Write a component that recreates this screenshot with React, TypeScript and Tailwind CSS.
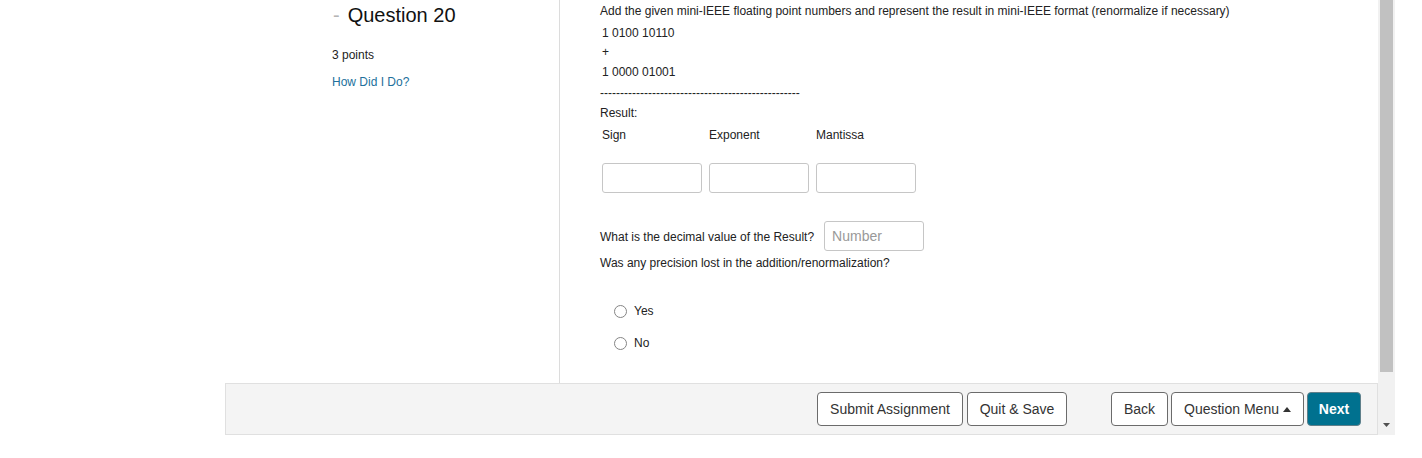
import React from 'react';

const dashes = '-'.repeat(50);

function RadioRow({ label, className }: { label: string; className?: string }) {
  return (
    <label className={`flex items-center h-5 pl-[14px] ${className ?? ''}`}>
      <span className="w-[13px] h-[13px] rounded-full border border-[#858585] bg-white" />
      <span className="ml-[7px]">{label}</span>
    </label>
  );
}

function FooterButton({ children, className }: { children: React.ReactNode; className?: string }) {
  return (
    <button
      className={`h-[34px] rounded-[4px] border border-[#6b6b6b] bg-white text-[14px] text-[#333] flex items-center justify-center ${className ?? ''}`}
    >
      {children}
    </button>
  );
}

export default function App() {
  return (
    <div
      className="w-[1422px] h-[458px] bg-white flex text-[#222]"
      style={{ fontFamily: '"Liberation Sans", Arial, sans-serif' }}
    >
      <div className="w-[225px] shrink-0" />

      <div className="w-[1153px] h-[435px] flex flex-col shrink-0">
        <div className="flex h-[383px]">
          {/* question info */}
          <div className="w-[335px] border-r border-[#dcdcdc] pl-[107px]">
            <h2 className="h-[31px] leading-[31px] text-[20px] text-[#111] flex">
              <span className="text-[#b5b5b5] mr-[8px] ml-[1px]">-</span>
              Question 20
            </h2>
            <p className="mt-[14px] h-5 leading-5 text-[12px] text-[#222]">3 points</p>
            <a className="block mt-[7px] h-5 leading-5 text-[12px] text-[#22709c]">How Did I Do?</a>
          </div>

          {/* question body */}
          <div className="flex-1 pl-[40px] pt-px text-[12px] leading-5">
            <p className="h-5">
              Add the given mini-IEEE floating point numbers and represent the result in mini-IEEE format (renormalize if necessary)
            </p>
            <div className="pl-[2px] mt-[2px]">
              <p className="h-5">1 0100 10110</p>
              <p className="h-[19px] leading-[19px]">+</p>
              <p className="h-5">1 0000 01001</p>
            </div>
            <p className="h-[19px] leading-[19px] mt-[2px]">{dashes}</p>
            <p className="h-5">Result:</p>

            <div className="flex gap-[7px] pl-[2px] mt-[2px]">
              {['Sign', 'Exponent', 'Mantissa'].map((label) => (
                <div key={label} className="w-[100px]">
                  <p className="h-5">{label}</p>
                  <input className="mt-[18px] w-[100px] h-[30px] rounded-[3px] border border-[#c6c6c6] bg-white" />
                </div>
              ))}
            </div>

            <div className="flex items-center h-[30px] mt-[28px]">
              <span className="pt-[2px]">What is the decimal value of the Result?</span>
              <input
                placeholder="Number"
                className="ml-[10px] w-[100px] h-[30px] rounded-[3px] border border-[#c6c6c6] px-[7px] text-[14px] placeholder:text-[#999]"
              />
            </div>
            <p className="h-5 mt-[2px]">Was any precision lost in the addition/renormalization?</p>

            <RadioRow label="Yes" className="mt-[28px]" />
            <RadioRow label="No" className="mt-[12px]" />
          </div>
        </div>

        {/* footer */}
        <div className="h-[52px] bg-[#f4f4f4] border border-[#e0e0e0] flex items-center justify-end pr-[16px]">
          <FooterButton className="w-[146px]">Submit Assignment</FooterButton>
          <FooterButton className="w-[100px] ml-[4px]">Quit &amp; Save</FooterButton>
          <FooterButton className="w-[57px] ml-[44px]">Back</FooterButton>
          <FooterButton className="w-[133px] ml-[3px]">
            Question Menu
            <svg width="8" height="5" viewBox="0 0 8 5" className="ml-[4px]">
              <path d="M0 5 L4 0 L8 5 Z" fill="#333" />
            </svg>
          </FooterButton>
          <button className="w-[54px] h-[34px] ml-[3px] rounded-[4px] border border-[#5f7f8a] bg-[#00718f] text-white font-bold text-[14px]">
            Next
          </button>
        </div>
      </div>

      {/* scrollbar */}
      <div className="w-[17px] h-[435px] bg-[#f1f1f1] relative shrink-0">
        <div className="absolute left-[2px] top-0 w-[13px] h-[372px] bg-[#c1c1c1]" />
        <svg width="7" height="4" viewBox="0 0 7 4" className="absolute left-[5px] top-[423px]">
          <path d="M0 0 L7 0 L3.5 4 Z" fill="#505050" />
        </svg>
      </div>
    </div>
  );
}
